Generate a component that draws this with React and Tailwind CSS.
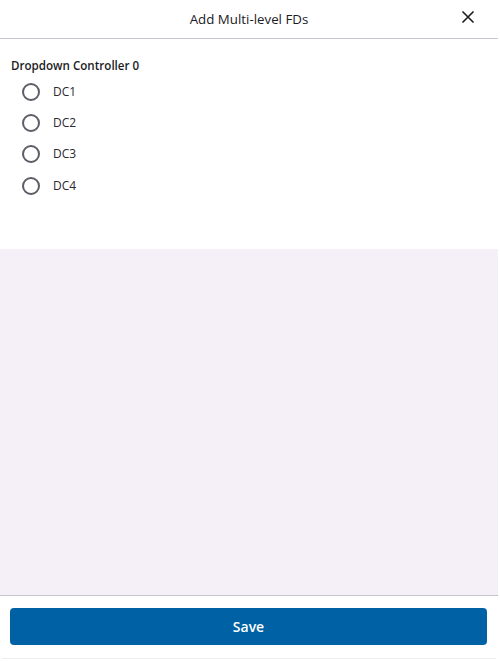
import React from "react";

function Radio({ label }) {
  return (
    <div className="flex items-center h-[31.4px]">
      <div className="w-[40px] flex justify-end">
        <span className="block w-[18px] h-[18px] rounded-full border-2 border-[#5f5d66]" />
      </div>
      <span className="ml-[13px] text-[12px] text-[#2b2930]">{label}</span>
    </div>
  );
}

export default function App() {
  return (
    <div className="w-[498px] h-[662px] flex flex-col bg-white" style={{ fontFamily: '"Open Sans", "Noto Sans", sans-serif' }}>
      <div className="relative h-[39px] flex items-center justify-center border-b border-[#cac4d0] shrink-0">
        <span className="text-[13.3px] font-medium text-[#1c1b1f] pt-[1px]">Add Multi-level FDs</span>
        <button className="absolute right-[20px] top-[7px] w-[20px] h-[20px] flex items-center justify-center">
          <svg width="14" height="14" viewBox="0 0 14 14">
            <path d="M1.5 1.5 L12.5 12.5 M12.5 1.5 L1.5 12.5" stroke="#1c1b1f" strokeWidth="1.6" />
          </svg>
        </button>
      </div>
      <div className="h-[210px] shrink-0 pt-[17px]">
        <div className="h-[20px] px-[11px] flex items-center text-[11.6px] font-semibold text-[#1c1b1f]">Dropdown Controller 0</div>
        <Radio label="DC1" />
        <Radio label="DC2" />
        <Radio label="DC3" />
        <Radio label="DC4" />
      </div>
      <div className="h-[347px] shrink-0 bg-[#f5f0f8] border-b border-[#cac4d0]" />
      <div className="h-[62px] shrink-0 px-[10px] pt-[12px]">
        <button className="w-[477px] h-[37px] rounded-[4px] bg-[#0062a4] text-white text-[14px] font-semibold flex items-center justify-center">
          Save
        </button>
      </div>
      <div className="h-px bg-[#efedf2] mx-[2px]" />
    </div>
  );
}
